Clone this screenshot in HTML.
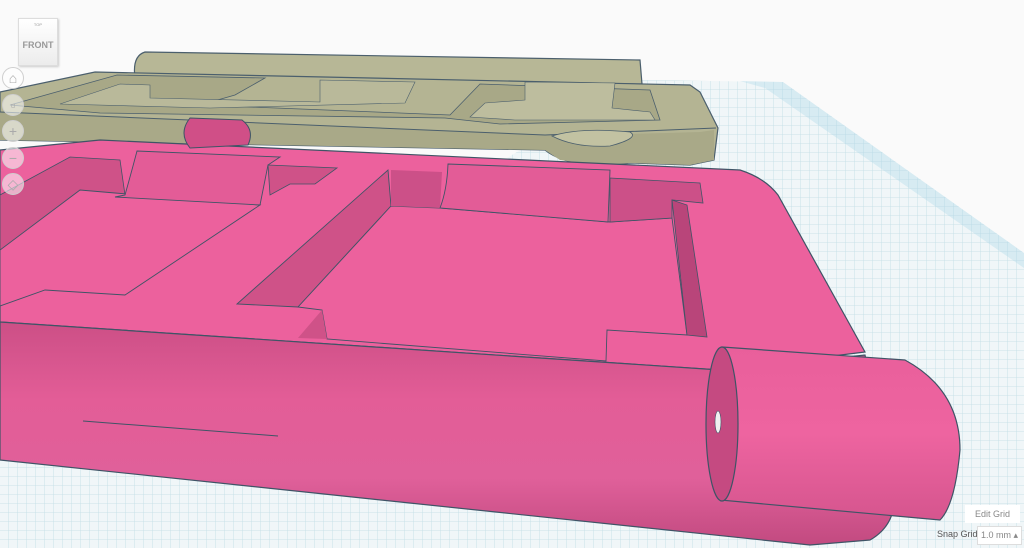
<!DOCTYPE html>
<html><head><meta charset="utf-8"><style>
html,body{margin:0;padding:0;width:1024px;height:548px;overflow:hidden;background:#fafafa;font-family:"Liberation Sans",sans-serif}
svg{position:absolute;left:0;top:0}
.btn{position:absolute;left:2px;width:20px;height:20px;border-radius:50%;background:rgba(255,255,255,.55);border:1px solid #cfcfcf;color:#aaa;font-size:14px;line-height:20px;text-align:center}
</style></head><body>
<svg width="1024" height="548" viewBox="0 0 1024 548">
<defs>
<pattern id="g" width="9" height="9" patternUnits="userSpaceOnUse"><rect width="9" height="9" fill="#f0f6f8"/><path d="M9 0V9M0 9H9" stroke="#c0dce4" stroke-width="0.8"/></pattern>
<linearGradient id="front" x1="0" y1="0" x2="0" y2="1"><stop offset="0" stop-color="#cc4f86"/><stop offset=".35" stop-color="#e35d97"/><stop offset=".7" stop-color="#e0609a"/><stop offset="1" stop-color="#c24a80"/></linearGradient>
<linearGradient id="cyl" x1="0" y1="0" x2="0" y2="1"><stop offset="0" stop-color="#e95f9b"/><stop offset=".5" stop-color="#ee64a0"/><stop offset="1" stop-color="#d5558e"/></linearGradient>
</defs>
<rect width="1024" height="548" fill="#fafafa"/>
<polygon points="640,80 783,82 1024,253 1024,548 0,548 0,455" fill="url(#g)"/>
<polygon points="740,81 783,82 1024,253 1024,268 765,88" fill="#a9d7e8" opacity=".35"/>
<!-- olive rod -->
<path d="M145,52 L640,60 L642,84 L135,78 Q132,56 145,52Z" fill="#b7b796" stroke="#4b5f6d" stroke-width="1.2"/>
<!-- olive plate -->
<path d="M0,92 L95,72 L690,85 L700,92 L718,128 L714,160 L690,165 L630,163 Q610,166 590,165 Q560,162 545,150 L0,140Z" fill="#b4b493" stroke="#4b5f6d" stroke-width="1.2"/>
<path d="M0,112 L545,135 Q600,135 700,132 L714,130 L714,160 L690,165 L630,163 Q600,166 560,160 L545,150 L0,140Z" fill="#a9a988"/>
<path d="M0,112 L545,135 Q620,132 716,128" fill="none" stroke="#4b5f6d" stroke-width="1"/>
<path d="M552,136 Q580,127 630,132 Q640,138 610,146 Q575,148 552,136Z" fill="#c2c2a2" stroke="#4b5f6d" stroke-width="0.8"/>
<!-- olive cavities -->
<polygon points="10,105 117,75 265,78 235,95 200,105 450,115 480,84 650,90 660,120 500,124 445,118 100,113" fill="#a8a887" stroke="#4b5f6d" stroke-width="0.8"/>
<polygon points="60,104 120,84 150,85 150,98 320,102 320,80 415,82 405,103 210,108" fill="#b9b99a" stroke="#4b5f6d" stroke-width="0.6"/>
<polygon points="485,103 525,100 525,82 615,83 612,108 650,112 655,120 515,120 470,117" fill="#bdbd9e" stroke="#4b5f6d" stroke-width="0.6"/>
<!-- pink plate top -->
<path d="M0,150 L100,140 L740,170 Q765,178 778,195 L865,352 L720,370 L0,322Z" fill="#ec619d" stroke="#3f5466" stroke-width="1.2"/>
<!-- pink front -->
<path d="M0,322 L720,370 L865,355 L890,470 Q905,520 870,540 L810,545 L0,460Z" fill="url(#front)" stroke="#3f5466" stroke-width="1.2"/>
<path d="M83,421 L278,436" stroke="#3f5466" stroke-width="1"/>
<!-- left cavity -->
<polygon points="0,195 70,157 120,160 125,195 0,250" fill="#cf5288" stroke="#3f5466" stroke-width="0.8"/>
<polygon points="0,250 80,190 115,193 260,205 125,295 45,290 0,306" fill="#ec619d" stroke="#3f5466" stroke-width="0.9"/>
<path d="M125,195 Q132,170 137,151 L280,157 L268,165 L260,205 L115,197Z" fill="#e35c97" stroke="#3f5466" stroke-width="0.9"/>
<polygon points="268,165 337,168 315,184 290,184 270,195" fill="#cf5288" stroke="#3f5466" stroke-width="0.8"/>
<!-- right cavity -->
<polygon points="388,170 391,206 298,307 237,304" fill="#cf5288" stroke="#3f5466" stroke-width="0.9"/>
<polygon points="391,206 440,208 610,222 672,218 687,335 607,330 606,361 327,339 322,310 298,307" fill="#ec619d" stroke="#3f5466" stroke-width="0.9"/>
<polygon points="391,170 442,172 440,208 391,206" fill="#cc5088"/>
<path d="M440,208 Q447,190 448,164 L610,170 L608,222Z" fill="#e35c97" stroke="#3f5466" stroke-width="0.9"/>
<polygon points="610,178 700,183 703,203 672,200 672,218 610,222" fill="#cc5088" stroke="#3f5466" stroke-width="0.8"/>
<polygon points="672,200 687,205 707,337 687,335" fill="#b9457a" stroke="#3f5466" stroke-width="0.8"/>
<polygon points="322,310 327,339 298,338" fill="#cf5288"/>
<!-- pink small pill -->
<path d="M190,118 L242,120 Q255,130 248,145 L190,148 Q178,133 190,118Z" fill="#d04f87" stroke="#3f5466" stroke-width="1"/>
<!-- cylinder -->
<path d="M722,347 L905,360 Q960,390 960,450 Q955,505 940,520 L720,500Z" fill="url(#cyl)" stroke="#3f5466" stroke-width="1.2"/>
<ellipse cx="722" cy="424" rx="16" ry="77" fill="#c54a81" stroke="#3f5466" stroke-width="1.2"/>
<ellipse cx="718" cy="422" rx="3" ry="11" fill="#f0f0f0" stroke="#3f5466" stroke-width="0.6"/>
</svg>
<div style="position:absolute;left:18px;top:18px;width:38px;height:46px;background:linear-gradient(#fff,#ececec);border:1px solid #ddd;box-shadow:1px 1px 2px #ccc"><div style="font-size:4px;color:#999;text-align:center;margin-top:3px">TOP</div><div style="font-size:9px;color:#999;font-weight:bold;text-align:center;margin-top:13px">FRONT</div></div>
<div class="btn" style="top:67px">⌂</div>
<div class="btn" style="top:94px">▫</div>
<div class="btn" style="top:120px">+</div>
<div class="btn" style="top:147px">−</div>
<div class="btn" style="top:173px">◇</div>
<div style="position:absolute;left:965px;top:505px;width:55px;height:18px;background:#fff;color:#888;font-size:9px;line-height:18px;text-align:center">Edit Grid</div>
<div style="position:absolute;left:937px;top:529px;color:#555;font-size:9px">Snap Grid</div>
<div style="position:absolute;left:977px;top:526px;width:43px;height:17px;background:#fff;border:1px solid #ddd;color:#888;font-size:9px;line-height:17px;text-align:center">1.0 mm ▴</div>
</body></html>
